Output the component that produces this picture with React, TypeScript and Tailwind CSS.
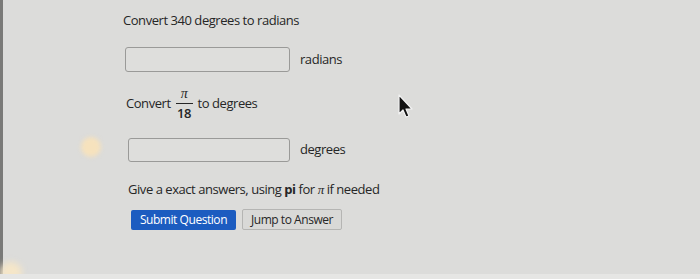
export default function App() {
  return (
    <div className="relative w-[700px] h-[279px] overflow-hidden bg-[#dcdcda] text-[#262626] font-['Open_Sans',sans-serif] font-medium tracking-[-0.45px]">
      <div className="absolute left-0 top-0 h-full w-[3px] bg-[#7a7a78]" />
      <div className="absolute left-[81px] top-[137px] h-[20px] w-[20px] rounded-full bg-[#f6e2bd] blur-[2px]" />
      <div className="absolute left-[0px] top-[262px] h-[22px] w-[22px] rounded-full bg-[#f5e6c8] blur-[3px]" />
      <div className="absolute left-0 bottom-0 h-[5px] w-full bg-[#e6e6e4]" />

      <div className="flex flex-col pl-[123px] pt-[11px]">
        <p className="text-[13px] leading-[18px]">Convert 340 degrees to radians</p>

        <div className="mt-[18px] ml-[2px] flex items-center gap-[10px]">
          <div className="h-[25px] w-[165px] rounded-[3px] border border-[#9a9a98] bg-[#dededc]" />
          <span className="text-[13px]">radians</span>
        </div>

        <div className="mt-[14px] ml-[3px] flex items-center gap-[5px] text-[13px]">
          <span>Convert</span>
          <span className="flex flex-col items-center">
            <span className="px-[2px] italic leading-[16px] text-[14px] font-['Liberation_Serif',serif]">π</span>
            <span className="h-px w-[17px] bg-[#262626] mt-[1px]" />
            <span className="mt-[1px] leading-[16px] font-semibold">18</span>
          </span>
          <span>to degrees</span>
        </div>

        <div className="mt-[17px] ml-[5px] flex items-center gap-[10px]">
          <div className="h-[24px] w-[162px] rounded-[3px] border border-[#9a9a98] bg-[#dededc]" />
          <span className="text-[13px]">degrees</span>
        </div>

        <p className="mt-[18px] ml-[5px] text-[13px] leading-[18px]">
          Give a exact answers, using <b>pi</b> for <i className="font-['Liberation_Serif',serif]">π</i> if needed
        </p>

        <div className="mt-[10px] ml-[8px] flex items-center gap-[6px]">
          <button className="h-[20px] w-[105px] rounded-[2px] bg-[#1c5cc0] text-[12px] text-white">Submit Question</button>
          <button className="h-[21px] w-[100px] rounded-[2px] border border-[#b5b5b3] bg-[#d9d9d7] text-[12px] text-[#262626]">Jump to Answer</button>
        </div>
      </div>

      <svg className="absolute left-[398px] top-[94px]" width="16" height="25" viewBox="0 0 16 25">
        <path d="M1 1 L1 20 L5 16 L8 23 L11 22 L8 15 L14 15 Z" fill="#111" stroke="#f2f2f2" strokeWidth="1.2" strokeLinejoin="round" />
      </svg>
    </div>
  );
}
